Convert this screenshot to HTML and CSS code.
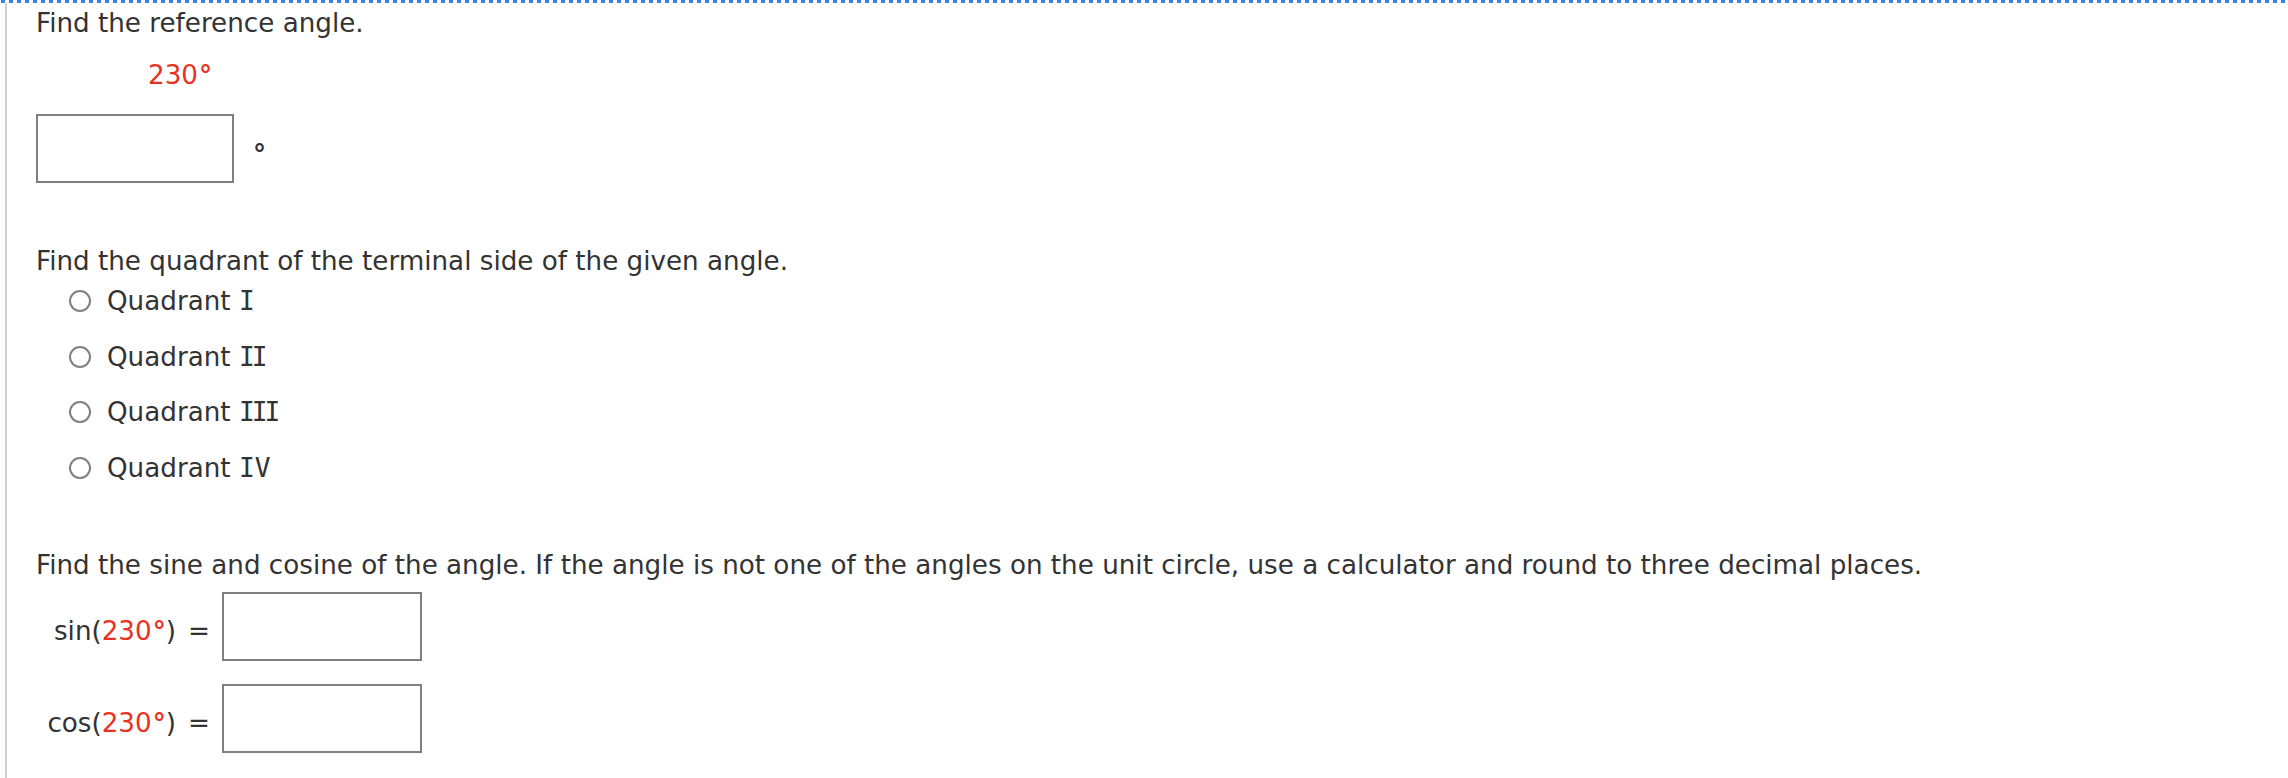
FILE: index.html
```html
<!DOCTYPE html>
<html>
<head>
<meta charset="utf-8">
<link rel="stylesheet" href="styles.css">
</head>
<body>
<div class="topbar"></div>
<div class="page">
  <div class="question">
    <p class="line">Find the reference angle.</p>
    <p class="line given"><span class="red">230<span class="deg">°</span></span></p>
    <div class="answer-row">
      <span class="box box-ref"></span>
      <span class="unit">°</span>
    </div>
  </div>

  <div class="question q2">
    <p class="line">Find the quadrant of the terminal side of the given angle.</p>
    <ul class="options">
      <li class="option"><span class="radio"></span><span class="label">Quadrant <span class="roman">I</span></span></li>
      <li class="option"><span class="radio"></span><span class="label">Quadrant <span class="roman">II</span></span></li>
      <li class="option"><span class="radio"></span><span class="label">Quadrant <span class="roman">III</span></span></li>
      <li class="option"><span class="radio"></span><span class="label">Quadrant <span class="roman roman-wide">IV</span></span></li>
    </ul>
  </div>

  <div class="question q3">
    <p class="line">Find the sine and cosine of the angle. If the angle is not one of the angles on the unit circle, use a calculator and round to three decimal places.</p>
    <div class="trig">
      <span class="fn">sin(<span class="red">230<span class="deg">°</span></span>)</span>
      <span class="eq">=</span>
      <span class="box box-trig"></span>
      <span class="fn">cos(<span class="red">230<span class="deg">°</span></span>)</span>
      <span class="eq">=</span>
      <span class="box box-trig"></span>
    </div>
  </div>
</div>
</body>
</html>
```

FILE: styles.css
```css
html, body {
  margin: 0;
  padding: 0;
  background: #ffffff;
}

body {
  font-family: "DejaVu Sans", Verdana, sans-serif;
  font-size: 26.2px;
  color: #333333;
}

.topbar {
  height: 3px;
  background: repeating-linear-gradient(to right, #3b82e2 0 4px, transparent 4px 8px);
  background-position: 1px 0;
}

.page {
  margin-left: 5px;
  border-left: 2px solid #cfcfcf;
  min-height: calc(100vh - 3px);
  padding: 5px 0 0 29px;
  box-sizing: border-box;
}

.line {
  margin: 0;
  line-height: 30px;
  white-space: nowrap;
}

.red {
  color: #e8321f;
}

.deg {
  font-weight: bold;
  margin-left: 1px;
}

.given {
  margin-top: 22px;
  padding-left: 112px;
}

.answer-row {
  display: flex;
  align-items: center;
  margin-top: 24px;
}

.box {
  display: block;
  box-sizing: border-box;
  border: 2px solid #7f7f7f;
  background: #ffffff;
  height: 69px;
}

.box-ref {
  width: 198px;
}

.unit {
  margin-left: 19px;
  line-height: 30px;
  margin-top: 10px;
  font-weight: bold;
}

.q2 {
  margin-top: 63px;
}

.options {
  list-style: none;
  margin: 10px 0 0 0;
  padding: 0 0 0 33px;
  display: flex;
  flex-direction: column;
  gap: 25.7px;
}

.option {
  display: flex;
  align-items: center;
  line-height: 30px;
}

.roman {
  font-family: "DejaVu Sans Mono", monospace;
  letter-spacing: -3px;
}

.roman-wide {
  letter-spacing: 0;
}

.radio {
  box-sizing: border-box;
  width: 22px;
  height: 22px;
  border: 2px solid #808080;
  border-radius: 50%;
  margin-right: 16px;
  flex: none;
}

.q3 {
  margin-top: 67px;
}

.trig {
  display: grid;
  grid-template-columns: 140px auto 200px;
  column-gap: 12px;
  row-gap: 23px;
  align-items: end;
  justify-content: start;
  margin-top: 12px;
}

.fn, .eq {
  line-height: 30px;
  margin-bottom: 15px;
  white-space: nowrap;
}

.fn {
  text-align: right;
}

.box-trig {
  width: 200px;
}
```
